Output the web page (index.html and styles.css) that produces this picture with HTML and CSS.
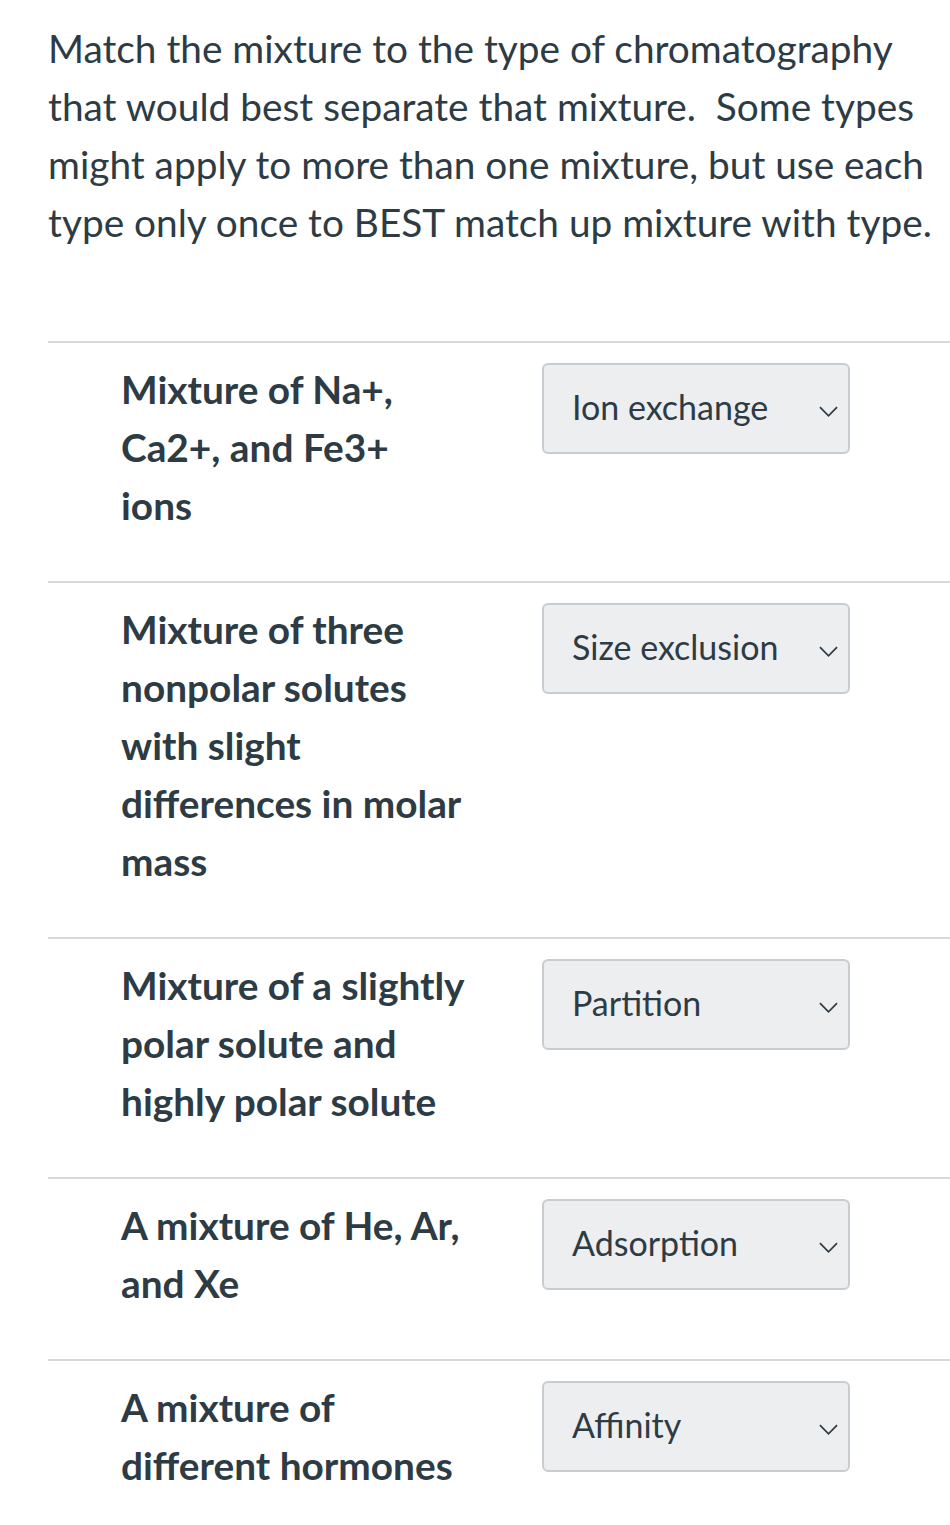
FILE: index.html
```html
<!DOCTYPE html>
<html lang="en">
<head>
  <meta charset="UTF-8">
  <meta name="viewport" content="width=device-width, initial-scale=1.0">
  <title>Matching Question</title>
  <link rel="stylesheet" href="styles.css">
</head>
<body>

  <div class="question">
    <p class="prompt">Match the mixture to the type of chromatography that would best separate that mixture.&nbsp; Some types might apply to more than one mixture, but use each type only once to BEST match up mixture with type.</p>

    <!-- Answer rows -->
    <div class="answers">
      <div class="answer-row">
        <div class="answer-label">Mixture of Na+, Ca2+, and Fe3+ ions</div>
        <div class="select">
          <span>Ion exchange</span>
          <svg class="chevron" viewBox="0 0 20 11"><path d="M1 1 L10 10 L19 1"/></svg>
        </div>
      </div>

      <div class="answer-row">
        <div class="answer-label">Mixture of three nonpolar solutes with slight differences in molar mass</div>
        <div class="select">
          <span>Size exclusion</span>
          <svg class="chevron" viewBox="0 0 20 11"><path d="M1 1 L10 10 L19 1"/></svg>
        </div>
      </div>

      <div class="answer-row">
        <div class="answer-label">Mixture of a slightly polar solute and highly polar solute</div>
        <div class="select">
          <span>Partition</span>
          <svg class="chevron" viewBox="0 0 20 11"><path d="M1 1 L10 10 L19 1"/></svg>
        </div>
      </div>

      <div class="answer-row">
        <div class="answer-label">A mixture of He, Ar, and Xe</div>
        <div class="select">
          <span>Adsorption</span>
          <svg class="chevron" viewBox="0 0 20 11"><path d="M1 1 L10 10 L19 1"/></svg>
        </div>
      </div>

      <div class="answer-row">
        <div class="answer-label">A mixture of different hormones</div>
        <div class="select">
          <span>Affinity</span>
          <svg class="chevron" viewBox="0 0 20 11"><path d="M1 1 L10 10 L19 1"/></svg>
        </div>
      </div>
    </div>
  </div>

</body>
</html>
```

FILE: styles.css
```css
/* General Styles */
body {
  font-family: Lato, "Noto Sans", sans-serif;
  background-color: #fff;
  color: #2d3b45;
  margin: 0;
  overflow-x: hidden;
}

.question {
  padding: 19px 0 0 48px;
}

/* Question text */
.prompt {
  margin: 0;
  font-size: 38.8px;
  line-height: 58px;
  padding-right: 10px;
}

/* Answer rows */
.answers {
  margin-top: 90px;
}

.answer-row {
  display: flex;
  align-items: flex-start;
  border-top: 2px solid #d7dadd;
  padding: 17px 0 47px 73px;
}

.answer-label {
  width: 345px;
  font-size: 38.8px;
  font-weight: bold;
  line-height: 58px;
}

/* Fake select box */
.select {
  display: flex;
  align-items: center;
  justify-content: space-between;
  box-sizing: border-box;
  width: 308px;
  height: 91px;
  margin: 3px 0 0 76px;
  padding: 0 10px 4px 28px;
  background-color: #edeeef;
  border: 2px solid #c7cdd1;
  border-radius: 6px;
  font-size: 34px;
}

.chevron {
  width: 19px;
  height: 11px;
  margin-top: 10px;
  fill: none;
  stroke: #2d3b45;
  stroke-width: 1.8;
}
```
